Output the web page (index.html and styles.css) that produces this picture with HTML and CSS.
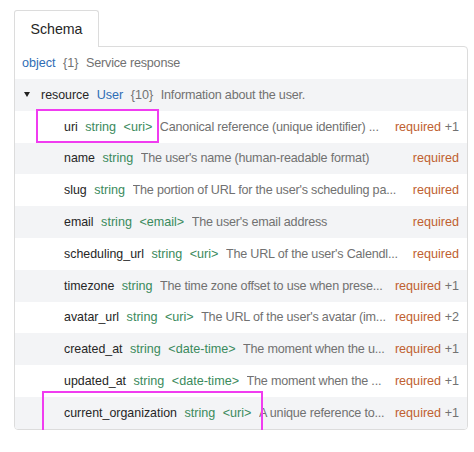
FILE: index.html
```html
<!DOCTYPE html>
<html lang="en">
<head>
<meta charset="utf-8">
<title>Schema</title>
<link rel="stylesheet" href="styles.css">
</head>
<body>
<div class="schema">
  <div class="tabs"><div class="tab">Schema</div></div>
  <div class="panel">
    <div class="row root">
      <span class="kind">object</span><span class="count">{1}</span><span class="desc">Service response</span>
    </div>
    <div class="row lvl1 stripe">
      <span class="caret"></span><span class="name">resource</span><span class="kind">User</span><span class="count">{10}</span><span class="desc">Information about the user.</span>
    </div>
    <div class="row lvl2">
      <span class="name">uri</span><span class="type">string</span><span class="type">&lt;uri&gt;</span><span class="desc">Canonical reference (unique identifier) ...</span><span class="req">required<span class="more">+1</span></span>
    </div>
    <div class="row lvl2 stripe">
      <span class="name">name</span><span class="type">string</span><span class="desc">The user's name (human-readable format)</span><span class="req">required</span>
    </div>
    <div class="row lvl2">
      <span class="name">slug</span><span class="type">string</span><span class="desc">The portion of URL for the user's scheduling pa...</span><span class="req">required</span>
    </div>
    <div class="row lvl2 stripe">
      <span class="name">email</span><span class="type">string</span><span class="type">&lt;email&gt;</span><span class="desc">The user's email address</span><span class="req">required</span>
    </div>
    <div class="row lvl2">
      <span class="name">scheduling_url</span><span class="type">string</span><span class="type">&lt;uri&gt;</span><span class="desc">The URL of the user's Calendl...</span><span class="req">required</span>
    </div>
    <div class="row lvl2 stripe">
      <span class="name">timezone</span><span class="type">string</span><span class="desc">The time zone offset to use when prese...</span><span class="req">required<span class="more">+1</span></span>
    </div>
    <div class="row lvl2">
      <span class="name">avatar_url</span><span class="type">string</span><span class="type">&lt;uri&gt;</span><span class="desc">The URL of the user's avatar (im...</span><span class="req">required<span class="more">+2</span></span>
    </div>
    <div class="row lvl2 stripe">
      <span class="name">created_at</span><span class="type">string</span><span class="type">&lt;date-time&gt;</span><span class="desc">The moment when the u...</span><span class="req">required<span class="more">+1</span></span>
    </div>
    <div class="row lvl2">
      <span class="name">updated_at</span><span class="type">string</span><span class="type">&lt;date-time&gt;</span><span class="desc">The moment when the ...</span><span class="req">required<span class="more">+1</span></span>
    </div>
    <div class="row lvl2 stripe">
      <span class="name">current_organization</span><span class="type">string</span><span class="type">&lt;uri&gt;</span><span class="desc">A unique reference to...</span><span class="req">required<span class="more">+1</span></span>
    </div>
  </div>
  <div class="highlight hl-uri"></div>
  <div class="highlight hl-org"></div>
</div>
</body>
</html>
```
FILE: styles.css
```css
* { box-sizing: border-box; }

body {
  margin: 0;
  background: #ffffff;
  font-family: "Liberation Sans", Arial, sans-serif;
  font-size: 12.6px;
  color: #333333;
}

.schema {
  position: relative;
  padding: 10px 6px 0 14px;
}

.tabs {
  display: flex;
}

.tab {
  position: relative;
  z-index: 1;
  width: 85px;
  height: 37px;
  margin-bottom: -1px;
  background: #ffffff;
  border: 1px solid #dcdcdc;
  border-bottom: none;
  border-radius: 3px 3px 0 0;
  display: flex;
  align-items: center;
  justify-content: center;
  padding-bottom: 1px;
  font-size: 14.2px;
  color: #262626;
}

.panel {
  width: 454px;
  border: 1px solid #dcdcdc;
  border-radius: 0 4px 4px 4px;
  overflow: hidden;
}

.row {
  display: flex;
  align-items: center;
  gap: 7.5px;
  height: 31.8px;
  padding-right: 8px;
  white-space: nowrap;
}

.row.root {
  height: 32px;
  padding-left: 7px;
}

.row.lvl1 { padding-left: 9px; }
.row.lvl2 { padding-left: 49px; }

.stripe { background: #f3f4f6; }

.caret {
  width: 0;
  height: 0;
  border-left: 3.5px solid transparent;
  border-right: 3.5px solid transparent;
  border-top: 5px solid #222222;
  margin-right: 3.5px;
}

.name {
  color: #262626;
  font-size: 12.4px;
}

.kind { color: #2f6db5; }

.count { color: #727272; }

.type { color: #3a8a5c; }

.desc {
  color: #717171;
  flex: 1 1 auto;
  min-width: 0;
  overflow: hidden;
  text-overflow: ellipsis;
  letter-spacing: -0.2px;
  margin-right: -2px;
}

.req {
  flex: none;
  margin-left: auto;
  color: #c0602f;
}

.more {
  color: #727272;
  margin-left: 3.5px;
}

.highlight {
  position: absolute;
  border: 2px solid #f03cf0;
  pointer-events: none;
}

.hl-uri {
  left: 36px;
  top: 109px;
  width: 123px;
  height: 34px;
}

.hl-org {
  left: 42px;
  top: 391px;
  width: 221px;
  height: 46px;
}
```
